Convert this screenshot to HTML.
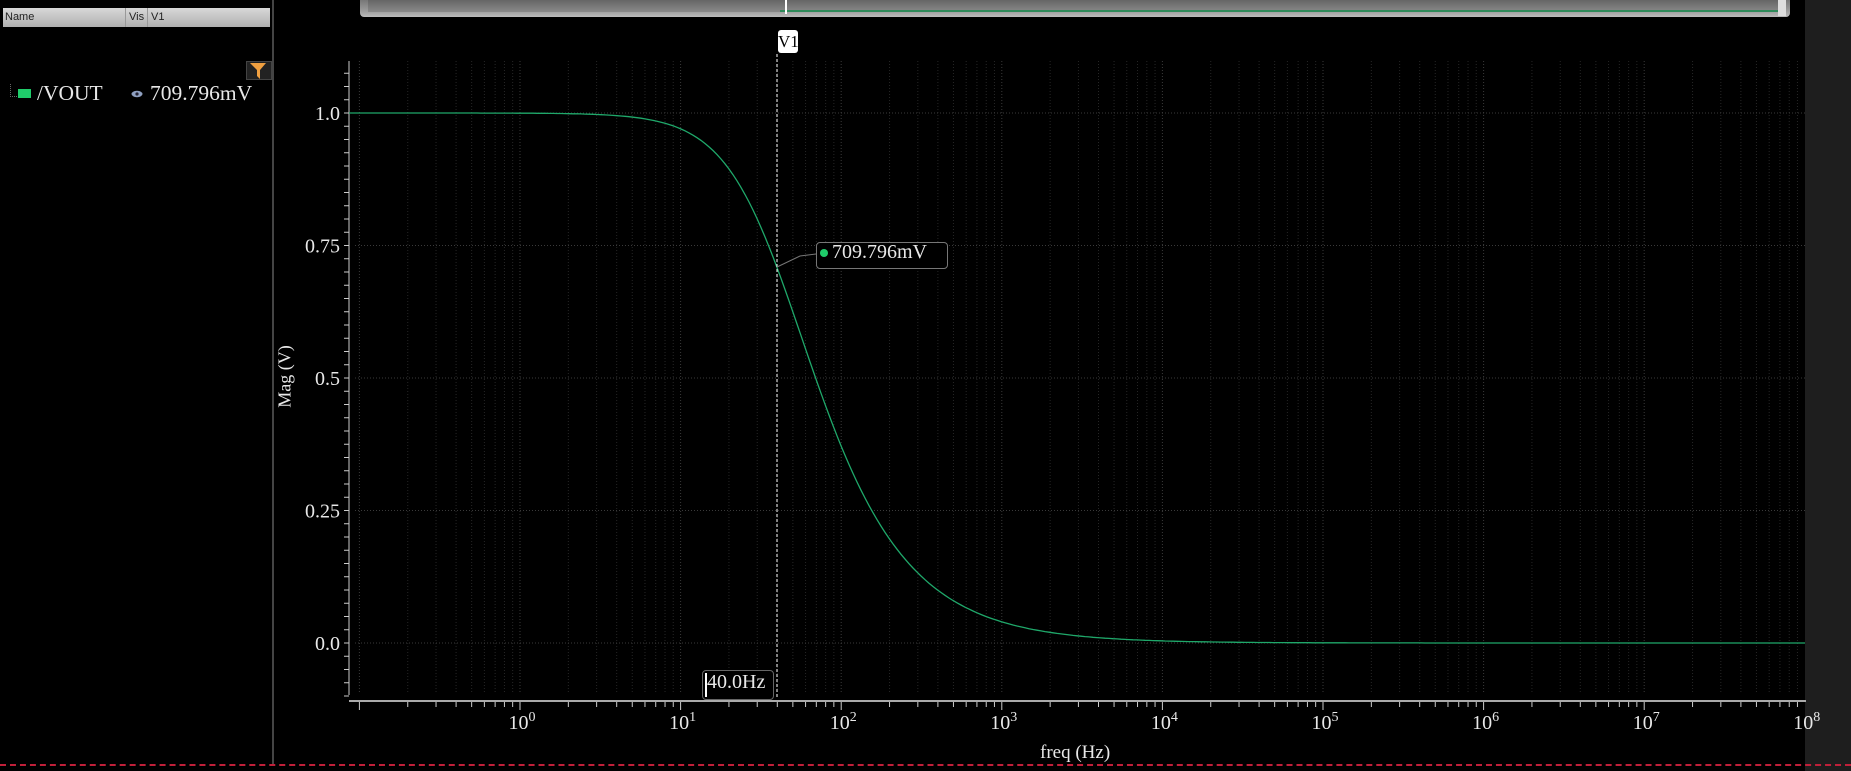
<!DOCTYPE html>
<html><head><meta charset="utf-8"><style>
html,body{margin:0;padding:0;background:#000;width:1851px;height:771px;overflow:hidden;font-family:"Liberation Serif",serif;color:#e8e8e8}
.abs{position:absolute;white-space:nowrap}
</style></head><body>
<div class="abs" style="left:3px;top:8px;width:267px;height:19px;background:linear-gradient(#d8d8d8,#b0b0b0);font:11px 'Liberation Sans',sans-serif;color:#222;line-height:19px">
<span class="abs" style="left:2px">Name</span>
<span class="abs" style="left:122px;top:0;width:1px;height:19px;background:#999"></span>
<span class="abs" style="left:126px">Vis</span>
<span class="abs" style="left:144px;top:0;width:1px;height:19px;background:#999"></span>
<span class="abs" style="left:148px">V1</span>
</div>
<div class="abs" style="left:272px;top:0;width:2px;height:765px;background:#444"></div>
<div class="abs" style="left:1805px;top:0;width:46px;height:771px;background:#1e1e1e"></div>
<div class="abs" style="left:0;top:764px;width:1851px;height:0;border-top:2px dashed #c0203a"></div>
<div class="abs" style="left:246px;top:61px;width:24px;height:17px;background:#222;border:1px solid #444"></div>
<svg class="abs" style="left:248px;top:62px" width="20" height="18"><path d="M2 1 H18 L12 8 V17 L9 14 V8 Z" fill="#f0a040"/></svg>
<div class="abs" style="left:10px;top:84px;width:6px;height:12px;border-left:1px dotted #666;border-bottom:1px dotted #666"></div>
<div class="abs" style="left:18px;top:89px;width:13px;height:9px;background:#1fcc6a"></div>
<div class="abs" style="left:37px;top:81px;font-size:21.5px">/VOUT</div>
<svg class="abs" style="left:131px;top:90px" width="12" height="8"><ellipse cx="6" cy="4" rx="5.5" ry="3.2" fill="#8fa0c0"/><circle cx="6" cy="4" r="1.6" fill="#223"/></svg>
<div class="abs" style="left:150px;top:81px;font-size:21.5px">709.796mV</div>
<div class="abs" style="left:360px;top:0;width:1430px;height:17px;background:linear-gradient(#777,#9a9a9a 60%,#bbb);border-radius:0 0 4px 4px"></div>
<div class="abs" style="left:368px;top:0;width:1410px;height:12px;background:linear-gradient(#666,#8a8a8a)"></div>
<div class="abs" style="left:780px;top:10px;width:998px;height:2px;background:#2f8a5a"></div>
<div class="abs" style="left:785px;top:0;width:2px;height:14px;background:#fff"></div>
<div class="abs" style="left:1778px;top:0;width:8px;height:16px;background:#ddd"></div>
<svg id="p" class="abs" style="left:0;top:0" width="1851" height="771"></svg>
<div class="abs" style="left:778px;top:30px;width:20px;height:23px;background:#fff;color:#000;border-radius:3px;font-size:17px;line-height:23px;text-align:center">V1</div>
<div class="abs" style="left:816px;top:242px;width:130px;height:25px;border:1px solid #777;border-radius:4px;background:#000"></div>
<div class="abs" style="left:820px;top:249px;width:8px;height:8px;border-radius:50%;background:#1fcc6a"></div>
<div class="abs" style="left:832px;top:241px;font-size:20px">709.796mV</div>
<div class="abs" style="left:702px;top:670px;width:70px;height:28px;border:1px solid #666;border-radius:4px;background:#000"></div>
<div class="abs" style="left:705px;top:673px;width:2px;height:24px;background:#fff"></div>
<div class="abs" style="left:707px;top:671px;font-size:20px">40.0Hz</div>
<div class="abs" style="left:245px;top:366px;font-size:18px;transform:rotate(-90deg);transform-origin:center;width:80px;text-align:center">Mag (V)</div>
<div class="abs" style="left:1040px;top:742px;font-size:19px">freq (Hz)</div>
<script>
var s=document.getElementById('p'),h='';
var X0=520,D=160.6,Y0=643,U=530,L=349,R=1806,T=61,B=701;
function fx(f){return X0+Math.log10(f)*D}
for(var d=-1;d<8;d++)for(var m=1;m<10;m++){var x=fx(m*Math.pow(10,d));if(x<L+2||x>R)continue;
h+='<line x1="'+x+'" y1="'+T+'" x2="'+x+'" y2="'+(B-8)+'" stroke="'+(m==1?'#3a3a3a':'#262626')+'" stroke-dasharray="1,2"/>';
h+='<line x1="'+x+'" y1="'+B+'" x2="'+x+'" y2="'+(B+(m==1?9:6))+'" stroke="#ccc"/>';}
for(var i=0;i<=4;i++){var y=Y0-i*0.25*U;h+='<line x1="'+(L+6)+'" y1="'+y+'" x2="'+R+'" y2="'+y+'" stroke="#3a3a3a" stroke-dasharray="1,2"/>';}
for(var v=-0.1;v<=1.101;v+=0.025){var y=Y0-v*U;if(y<T)continue;h+='<line x1="'+(L-5)+'" y1="'+y+'" x2="'+L+'" y2="'+y+'" stroke="#ccc"/>';}
h+='<line x1="'+L+'" y1="'+T+'" x2="'+L+'" y2="'+(B-6)+'" stroke="#ccc"/>';
h+='<line x1="'+L+'" y1="'+B+'" x2="'+R+'" y2="'+B+'" stroke="#aaa" stroke-width="2"/>';
var lab=['0.0','0.25','0.5','0.75','1.0'];
for(var i=0;i<5;i++)h+='<text x="'+(L-9)+'" y="'+(Y0-i*0.25*U+7)+'" fill="#e8e8e8" font-size="20" text-anchor="end" font-family="Liberation Serif">'+lab[i]+'</text>';
for(var d=0;d<=8;d++){var x=fx(Math.pow(10,d));h+='<text x="'+(x+2)+'" y="'+(B+28)+'" fill="#e8e8e8" font-size="20" text-anchor="middle" font-family="Liberation Serif">10<tspan dy="-8" font-size="14">'+d+'</tspan></text>';}
var pts=[];for(var x=L;x<=R;x+=4){var f=Math.pow(10,(x-X0)/D);var m=1/Math.sqrt(1+f*f/1600);pts.push(x+','+(Y0-m*U).toFixed(1));}
h+='<polyline points="'+pts.join(' ')+'" fill="none" stroke="#1fa86a" stroke-width="1.3"/>';
h+='<line x1="777" y1="54" x2="777" y2="698" stroke="#fff" stroke-dasharray="3,2"/>';
h+='<path d="M777 267 L800 256 L816 254" fill="none" stroke="#777"/>';
s.innerHTML=h;
</script>
</body></html>
